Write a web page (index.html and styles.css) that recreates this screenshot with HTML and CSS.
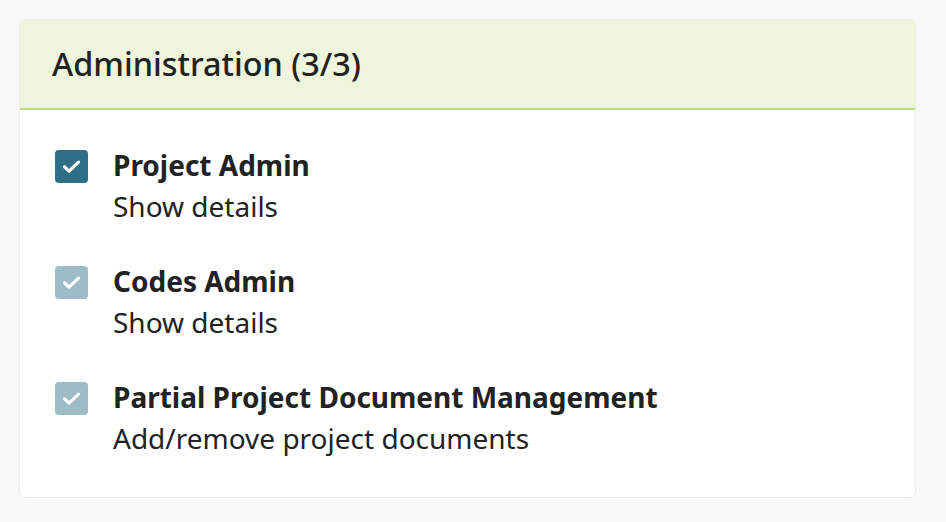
FILE: index.html
```html
<!DOCTYPE html>
<html lang="en">

<head>
    <meta charset="UTF-8">
    <meta name="viewport" content="width=device-width, initial-scale=1.0">
    <link rel="stylesheet" href="styles.css">
</head>

<body>
    <!-- Permission group card -->
    <section class="card">
        <header class="card-header">
            <h2>Administration (3/3)</h2>
        </header>

        <ul class="perm-list">
            <li class="perm">
                <span class="check check-on">
                    <svg viewBox="0 0 33 33"><path d="M9.5 16.8l4.6 4.3 9.4-9" /></svg>
                </span>
                <div class="perm-text">
                    <strong>Project Admin</strong>
                    <span>Show details</span>
                </div>
            </li>
            <li class="perm">
                <span class="check check-off">
                    <svg viewBox="0 0 33 33"><path d="M9.5 16.8l4.6 4.3 9.4-9" /></svg>
                </span>
                <div class="perm-text">
                    <strong>Codes Admin</strong>
                    <span>Show details</span>
                </div>
            </li>
            <li class="perm">
                <span class="check check-off">
                    <svg viewBox="0 0 33 33"><path d="M9.5 16.8l4.6 4.3 9.4-9" /></svg>
                </span>
                <div class="perm-text">
                    <strong>Partial Project Document Management</strong>
                    <span>Add/remove project documents</span>
                </div>
            </li>
        </ul>
    </section>
</body>

</html>
```

FILE: styles.css
```css
/* page */
body {
    margin: 0;
    padding: 19px 30px 23px 19px;
    background-color: #f8f8f7;
    font-family: 'Noto Sans', 'Open Sans', sans-serif;
    color: #222;
}

/* card */
.card {
    background-color: #fff;
    border: 1px solid #ececea;
    border-radius: 6px;
    overflow: hidden;
}

.card-header {
    background-color: #eef5dc;
    border-bottom: 2px solid #bed688;
    padding: 23px 32px 25px;
}

.card-header h2 {
    margin: 0;
    font-size: 32.4px;
    line-height: 40px;
    font-weight: 500;
}

/* permission rows */
.perm-list {
    list-style: none;
    margin: 0;
    padding: 35px 35px 38px;
    display: flex;
    flex-direction: column;
    gap: 34px;
}

.perm {
    display: flex;
    align-items: flex-start;
    gap: 25px;
}

.check {
    flex: none;
    width: 33px;
    height: 33px;
    margin-top: 5px;
    border-radius: 4px;
}

.check-on {
    background-color: #2f6f86;
}

.check-off {
    background-color: #9dbcc8;
}

.check svg {
    display: block;
    width: 33px;
    height: 33px;
    fill: none;
    stroke: #fff;
    stroke-width: 3.2;
    stroke-linecap: round;
    stroke-linejoin: round;
}

.perm-text {
    display: flex;
    flex-direction: column;
    font-size: 28px;
    line-height: 41px;
}

.perm-text strong {
    font-weight: 700;
}
```
